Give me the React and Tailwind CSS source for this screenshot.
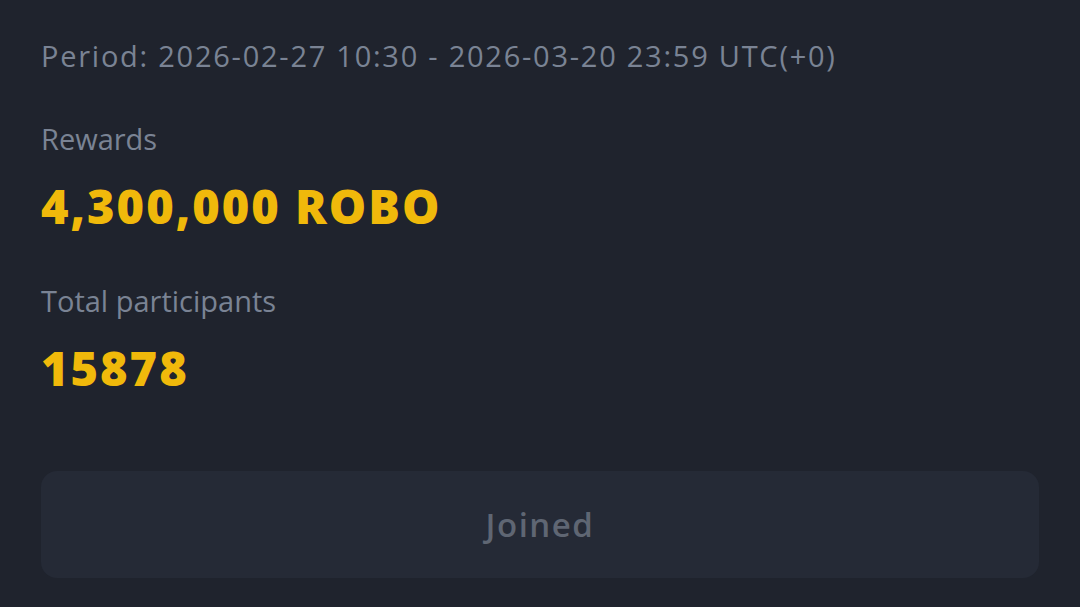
import React from 'react';

const font = { fontFamily: '"Open Sans", "Noto Sans", sans-serif' };

function Stat({ label, value }) {
  return (
    <div className="flex flex-col">
      <span className="text-[29px] leading-[40px] text-[#7a8394]">{label}</span>
      <span className="mt-[22px] text-[47px] leading-[50px] font-extrabold tracking-[2px] text-[#f0b90b]">{value}</span>
    </div>
  );
}

export default function App() {
  return (
    <div className="w-[1080px] h-[607px] bg-[#1f232d] px-[41px] pt-[36px] flex flex-col" style={font}>
      <p className="text-[29px] leading-[40px] tracking-[1.75px] text-[#7a8394]">
        Period: 2026-02-27 10:30 - 2026-03-20 23:59 UTC(+0)
      </p>
      <div className="mt-[43px] flex flex-col gap-[50px]">
        <Stat label="Rewards" value="4,300,000 ROBO" />
        <Stat label="Total participants" value="15878" />
      </div>
      <button className="mt-[78px] h-[107px] w-full rounded-[16px] bg-[#252a36] text-[33px] font-semibold tracking-[1.5px] text-[#5f6673]">
        Joined
      </button>
    </div>
  );
}
